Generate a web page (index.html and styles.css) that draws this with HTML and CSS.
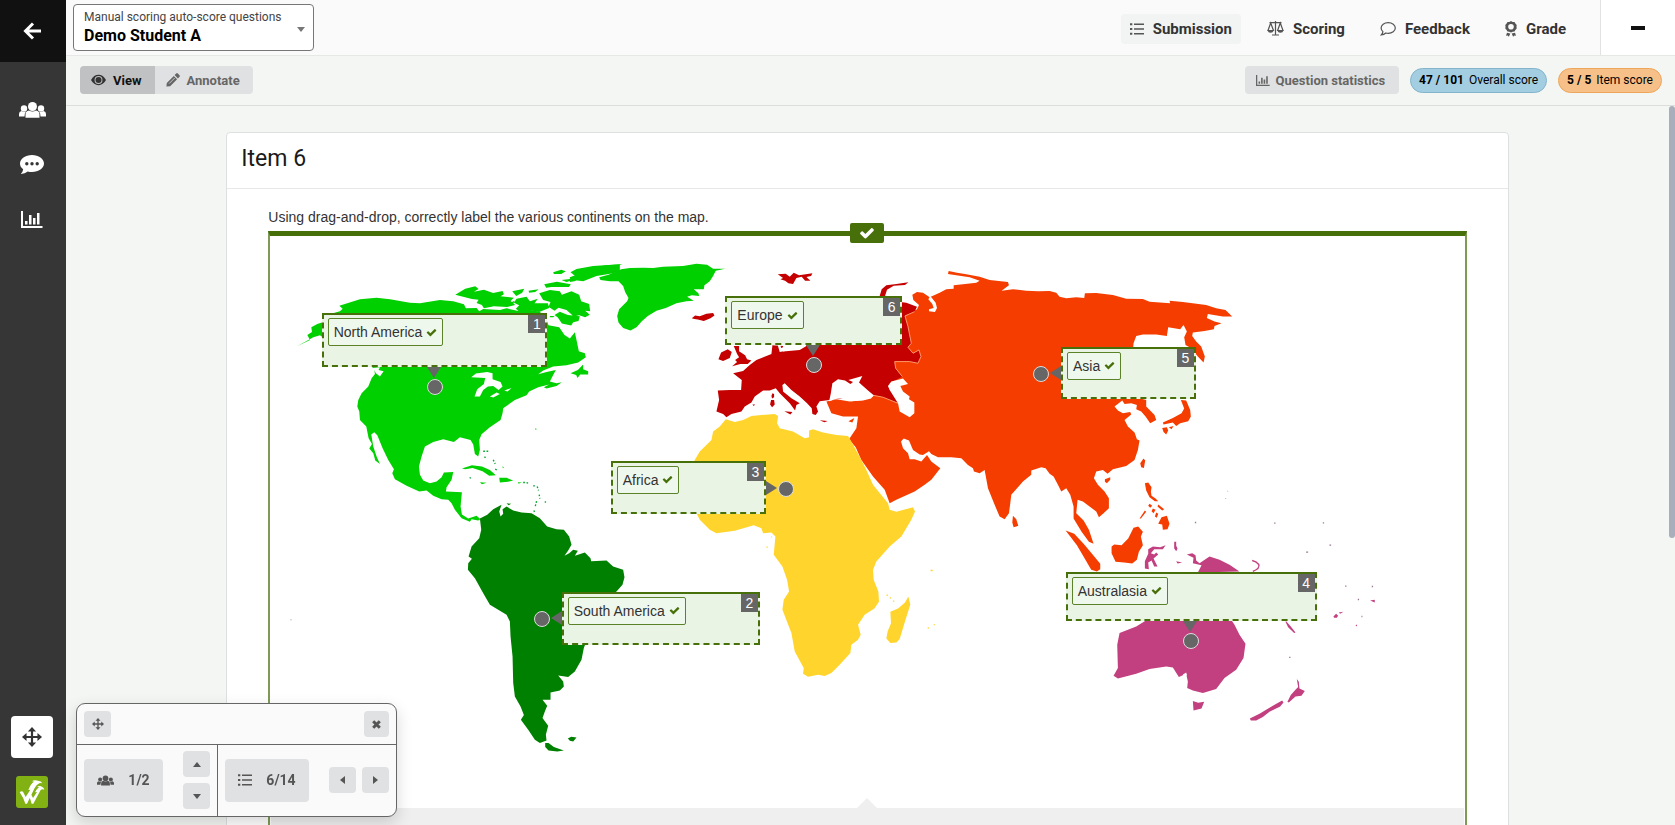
FILE: index.html
```html
<!DOCTYPE html>
<html lang="en">
<head>
<meta charset="utf-8">
<title>Item 6 – Demo Student A</title>
<link rel="stylesheet" href="styles.css">
</head>
<body>
<svg class="defs" aria-hidden="true">
  <symbol id="i-check" viewBox="0 0 1792 1792"><path d="M1671 566q0 40-28 68l-724 724-136 136q-28 28-68 28t-68-28l-136-136-362-362q-28-28-28-68t28-68l136-136q28-28 68-28t68 28l294 295 656-657q28-28 68-28t68 28l136 136q28 28 28 68z"/></symbol>
  <symbol id="i-users" viewBox="0 0 27 16"><circle cx="13.500" cy="4.500" r="4.500"/><circle cx="5" cy="6.500" r="3.200"/><circle cx="22" cy="6.500" r="3.200"/><path d="M6.500 15.800v-3q0-4 3.500-4.300 3.500 2 7 0 3.500.3 3.500 4.300v3zM0 14.600v-2.500Q0 9.500 2.500 9q2.500 1.600 4.500.6-1.500 1.400-1.500 5zM27 14.600v-2.500q0-2.600-2.500-3.100-2.500 1.600-4.500.6 1.500 1.400 1.500 5z"/></symbol>
  <symbol id="i-chart" viewBox="0 0 22 17"><path d="M0 0h2v15h19.500v2H0zM4 10h2.500v3.500H4zM8 4h2.500v9.500H8zM12 7h2.500v6.500H12zM16 2h2.500v11.500H16z"/></symbol>
  <symbol id="i-move" viewBox="0 0 22 22"><path d="M11 0l4.500 5H12.200v4.800H17V6.500l5 4.500-5 4.500v-3.300h-4.800V17h3.300L11 22l-4.500-5h3.300v-4.800H5v3.300L0 11l5-4.500v3.300h4.800V5H6.500z"/></symbol>
  <symbol id="i-list" viewBox="0 0 14 12"><path d="M0 .3h2.300v2H0zM0 5h2.300v2H0zM0 9.700h2.300v2H0zM4 .5h10v1.600H4zM4 5.200h10v1.600H4zM4 9.900h10v1.600H4z"/></symbol>
  <symbol id="i-up" viewBox="0 0 8 5"><path d="M0 5L4 0l4 5z"/></symbol>
  <symbol id="i-down" viewBox="0 0 8 5"><path d="M0 0h8L4 5z"/></symbol>
  <symbol id="i-left" viewBox="0 0 5 8"><path d="M5 0v8L0 4z"/></symbol>
  <symbol id="i-right" viewBox="0 0 5 8"><path d="M0 0v8l5-4z"/></symbol>
</svg>

<div class="app">
  <nav class="rail" aria-label="Main">
    <a class="rail-back" href="#" aria-label="Back"><svg width="19" height="18" viewBox="0 0 19 18"><path d="M10 1.500L2.500 9l7.500 7.500M3 9h15" fill="none" stroke="currentColor" stroke-width="3"/></svg></a>
    <div class="rail-links">
      <a href="#" aria-label="Students"><svg width="27" height="16"><use href="#i-users"/></svg></a>
      <a href="#" aria-label="Comments"><svg width="24" height="19" viewBox="0 0 24 19"><path fill-rule="evenodd" d="M12 0c6.600 0 12 3.800 12 8.500S18.600 17 12 17q-2.200 0-4.200-.5Q5 18.700.7 18.900 2.900 17 3.200 14.300 0 12 0 8.500C0 3.800 5.400 0 12 0zM6.800 7a1.700 1.700 0 100 3.400A1.700 1.700 0 006.800 7zM12 7a1.700 1.700 0 100 3.400A1.700 1.700 0 0012 7zm5.200 0a1.700 1.700 0 100 3.400 1.700 1.700 0 000-3.400z"/></svg></a>
      <a href="#" aria-label="Statistics"><svg width="22" height="17"><use href="#i-chart"/></svg></a>
    </div>
    <div class="rail-foot">
      <button class="rail-move" aria-label="Toggle navigation panel"><svg width="20" height="20"><use href="#i-move"/></svg></button>
      <a class="rail-logo" href="#" aria-label="Home"><svg width="32" height="32" viewBox="0 0 96 96"><path d="M11 49Q17 44 21 47L29 63 43 41 37 42Q44 23 54 17 50 15 46 17 54 10 66 14 76 15 79 22 74 20 70 22 62 26 56 36L33 83H28Q22 64 11 49zM36 54Q40 50 44 52L51 66 63 48 57 49Q62 38 69 34 66 32 62 34 70 27 78 32 84 35 85 41 78 38 74 42L52 83H47Q43 66 36 54z"/></svg></a>
    </div>
  </nav>

  <div class="main">
    <header class="topbar">
      <div class="student">
        <label for="student">Manual scoring auto-score questions</label>
        <select id="student"><option>Demo Student A</option></select>
        <svg class="student-caret" width="8" height="5"><use href="#i-down"/></svg>
      </div>
      <nav class="tabs" aria-label="Sections">
        <a class="tab tab-on" href="#"><svg width="14" height="12"><use href="#i-list"/></svg>Submission</a>
        <a class="tab" href="#"><svg width="17" height="15" viewBox="0 0 17 15"><path d="M2.500 1.700h12M8.500 0v14M5 14h7M3.700 2L1 9.500h5.500zM13.300 2l-2.700 7.500H16z" fill="none" stroke="currentColor" stroke-width="1.200"/><path d="M.5 9.200h6.200q-.5 2.600-3.100 2.600T.5 9.200zM10.300 9.200h6.200q-.5 2.600-3.100 2.600t-3.100-2.600z"/></svg>Scoring</a>
        <a class="tab" href="#"><svg width="16" height="14" viewBox="0 0 16 14"><path d="M8.200.7c4 0 7.100 2.300 7.100 5.300s-3.100 5.300-7.100 5.300q-1.300 0-2.400-.3-1.800 1.700-4.500 1.900Q2.700 11.500 2.900 9.600 1.100 8.100 1.100 6C1.100 3 4.200.7 8.200.7z" fill="none" stroke="currentColor" stroke-width="1.200"/></svg>Feedback</a>
        <a class="tab" href="#"><svg width="12" height="16" viewBox="0 0 12 16"><path fill-rule="evenodd" d="M6 0l1.600.9 1.900.1.900 1.600L11.700 4l-.2 1.800.2 1.800-1.300 1.400-.9 1.600-1.900.1L6 11.500l-1.600-.8-1.900-.1L1.600 9 .3 7.600l.2-1.800L.3 4l1.300-1.400.9-1.600L4.400.9zM6 3a2.800 2.800 0 100 5.600A2.800 2.800 0 006 3zM2 11.700l3.300.9-1.400 3.200-1.200-1.300-1.700.3zM10 11.700l-3.300.9 1.400 3.200 1.200-1.300 1.700.3z"/></svg>Grade</a>
      </nav>
      <button class="collapse" aria-label="Collapse"><span></span></button>
    </header>

    <div class="toolbar">
      <div class="modes">
        <button class="mode mode-on" aria-pressed="true"><svg width="15" height="12" viewBox="0 0 16 12"><path fill-rule="evenodd" d="M8 .5q5 0 8 5.500-3 5.500-8 5.500T0 6Q3 .5 8 .5zm0 1.300A4.200 4.200 0 008 10.200 4.200 4.200 0 008 1.800z"/><circle cx="8" cy="6" r="3.200"/></svg>View</button>
        <button class="mode" aria-pressed="false"><svg width="14" height="14" viewBox="0 0 14 14"><path d="M10.200.5q.8-.8 1.600 0l1.700 1.700q.8.800 0 1.600l-1.600 1.600-3.300-3.300zM7.800 2.900l3.300 3.300-7 7L.4 13.600.8 9.900z"/><path d="M3.200 10.500l5.500-5.500" stroke="#e0e1e2" stroke-width=".8"/></svg>Annotate</button>
      </div>
      <div class="scores">
        <button class="stats"><svg width="14" height="11"><use href="#i-chart"/></svg>Question statistics</button>
        <span class="pill pill-blue"><b>47 / 101</b>Overall score</span>
        <span class="pill pill-orange"><b>5 / 5</b>Item score</span>
      </div>
    </div>

    <div class="scroller">
      <div class="scroll-area">
      <main class="card">
        <h1>Item 6</h1>
        <div class="card-body">
          <p class="prompt">Using drag-and-drop, correctly label the various continents on the map.</p>
          <section class="question">
            <span class="result"><svg width="16" height="16"><use href="#i-check"/></svg></span>
            <div class="map">
              <svg class="world" viewBox="270 236 1195 572" role="img" aria-label="World map">
                <g transform="translate(260 240) scale(.33333)" fill="#00cf00">
                  <path d="M110 320L150 300 142 285 156 276 154 262 172 252 190 246 200 225 240 214 248 206 238 197 262 190 300 178 350 173 390 178 450 188 480 190 540 180 580 184 612 193 618 205 650 204 658 214 670 207 720 210 740 205 775 213 790 196 800 208 840 215 860 240 866 256 898 262 914 285 930 296 945 277 952 310 957 334 975 340 978 352 955 368 920 376 880 380 850 392 835 403 860 396 888 390 880 405 870 425 890 430 906 427 890 438 860 446 852 442 868 434 835 442 808 455 800 466 765 480 730 505 728 520 722 540 690 562 665 583 658 600 660 630 655 650 645 642 640 614 632 600 600 592 582 606 550 598 520 606 495 620 485 650 477 680 480 705 490 722 510 730 530 725 545 712 552 698 580 696 575 720 560 742 558 755 606 757 602 800 606 824 625 836 650 828 662 838 655 842 635 838 630 846 605 835 585 810 575 790 565 780 545 778 520 768 500 752 478 755 440 738 405 718 397 700 402 688 385 660 368 625 352 586 343 577 334 584 340 620 350 650 360 672 346 662 340 640 328 626 336 612 326 595 319 560 300 540 298 515 292 500 295 480 305 460 325 440 335 415 345 402 342 385 240 330 180 286 160 292z"/>
                  <path d="M586 164l30-18 30-7 10 8-14 8 30-6 28 10 28-6 4 10-10 6 40 4-10 10 14 12-24 6-40-2-30 6-6-10-16-6 6-10-20-2zM757 154l36-8-6 12-18 10zM806 152l30-4-10 8-18 2zM748 190l16-8-4 10-14 6zM770 176l30-6 10 14 24-8-10 14 40 0 4 14-30 12-30-6-24 10-16-14 10-10-16-8zM838 160L870 150 900 154 906 164 935 154 958 164 964 184 988 192 991 214 976 212 990 224 976 232 958 226 942 230 920 210 896 203 884 212 866 200 872 186 850 180zM853 133l38-8 42 8-6 8-52 0-16 2zM880 97l24-8 14 5-14 8-22 0zM932 97L950 87 1000 78 1080 73V92L1060 100 1010 108 970 124 940 120 920 126 905 120 938 116 946 108zM900 215l24 10 36 4-4 14-16 4-6 10-28-6-12-18-10-8zM870 228l14 0-4 4-10 0zM932 400l22-10 16-16 0 14 15 6 0 10-24 0-8 10-4-9z"/>
                  <path d="M606 686l30-10 30 4 24 10 18 16-20 2-20-14-30-10-22 4zM718 714l22 0 20 8-16 4-24 2zM660 727l20 2-14 4zM774 727l12 1-10 4zM727 680l6 2-4 2zM826 565l5 2-4 3z"/>
                  <path d="M670 634h20M674 650l5 8M700 660l6 12M706 688l6 3M790 728h6M800 728l6 2M820 738h8M832 740l4 12M838 764l2 12M830 784l-4 16M855 785l3 3M822 812l3 8M630 712l2 4" fill="none" stroke="#00a830" stroke-width="4" stroke-dasharray="5 5"/>
                  <path d="M634 412L648 401 682 396 698 400 698 418 722 426 728 440 716 450 700 438 684 440 670 450 660 470 644 470 652 448 672 432 676 414zM690 470l20-12 10 4-20 11zM733 452l22-8-12 11zM338 384L360 382 356 390 371 394 360 410 348 400z" fill="#fff"/>
                </g>
                <g transform="translate(570 240) scale(.33333)" fill="#00cf00">
                  <path d="M88 112L116 104 154 88 180 84 220 83 250 84 280 80 340 78 380 71 412 74 430 86 466 86 438 92 430 108 420 124 404 136 402 148 372 148 386 160 388 168 366 166 352 170 372 182 350 184 320 190 288 204 260 212 234 228 216 244 200 262 182 272 160 264 146 248 142 228 148 208 172 184 176 174 166 156 160 138 146 124 120 124 92 120zM0 112L20 104 16 94 60 84 110 76 158 73 120 86 60 100 14 124 0 126z"/>
                </g>
                <g transform="translate(880 250) scale(.33333)" fill="#f53d00">
                  <path d="M78 198L112 178 118 165 101 150 98 134 112 126 130 128 150 142 180 128 200 118 222 116 222 106 250 103 290 98 300 92 270 82 205 72 207 63 232 68 256 72 300 80 330 90 385 96 388 106 366 122 400 118 440 122 476 124 510 123 530 128 540 140 560 145 590 142 614 144 616 130 650 129 700 135 740 146 790 147 810 155 872 160 870 152 910 156 980 165 1010 175 1038 180 1058 200 1030 200 985 192 982 204 1005 215 1026 220 1005 228 1003 238 975 243 940 248 938 258 950 275 965 290 976 320 972 338 955 320 935 295 918 285 914 262 922 245 912 225 902 238 866 232 862 258 830 254 790 254 770 258 762 280 760 300 760 440 800 450 800 470 825 495 830 510 812 520 798 500 785 485 770 478 772 465 755 460 735 462 728 452 705 470 715 482 730 490 752 486 755 494 735 510 745 530 765 548 772 568 780 572 775 600 765 630 740 648 700 658 684 672 670 660 650 665 643 685 655 705 675 725 688 745 688 775 672 790 658 802 650 785 630 770 610 755 594 750 590 790 612 812 628 840 642 882 628 876 606 846 582 806 582 770 572 735 560 715 545 725 535 705 522 680 510 672 498 655 485 652 455 662 455 675 430 695 415 712 395 735 392 760 388 790 375 808 360 800 345 765 325 715 315 660 300 670 283 665 280 655 265 645 245 625 215 622 175 622 155 612 148 604 130 615 120 614 100 600 88 572 72 566 64 575 70 595 85 610 90 628 105 628 125 635 142 615 155 635 182 655 155 690 135 705 105 725 50 750 30 760 15 720 -20 680 -55 630 -72 592 -92 568 -70 535 -65 500 -110 500 -145 490 -160 455 -130 448 -90 455 -50 450 -20 440 0 350 0 260z"/>
                  <path d="M152 138l16 20 4 16-6 12-18-2 0-6 14-4-4-12-12-14z" fill="#fff"/>
                  <path d="M904 450L920 452 932 480 934 500 926 514 902 520 890 528 880 518 852 524 850 518 880 504 906 490 914 476zM848 534l14-2 4 10-6 12-8-8zM868 532l14-4-6 10zM782 640l10-14 5 6-4 22-8-2zM676 688l16-6 0 8-10 10-6-4zM796 700l10-2 10 14-2 14 2 12 12 8 8 8-10 0-16-12-10-20zM796 782l-16 24 4 0 16-20zM400 798l10 10 6 20-14 4-4-14zM830 744l10 6M810 762l8 6-6 6-6-6zM820 776l8 4-6 10-6-6zM836 764l18 14-6 4-14-12zM830 788l6 4-4 12-6-4zM846 802l16-4 8 24-6 16-14 2-2-16-12-2zM-94 514L-76 504-82 518z"/>
                </g>
                <g transform="translate(570 240) scale(.33333)" fill="#c40000">
                  <path d="M624 103l24-2 12 9 12-12 16 8 40-6-4 8-14 3 12 11-16 0-10-12-16 4-10 18-14-2-10-8-14-4 8-4zM366 235l10-8 14 2 20-8 20-2 4 8-12 8-20 8-18-4-10-2zM930 168l6-20 14-12 30-4 36-5-10 8-34 2-20 12-6 19z"/>
                  <path d="M446 358L454 338 474 328 486 336 480 354 460 363zM492 318L508 318 508 334 526 346 532 358 545 362 534 372 512 372 487 379 502 366 496 360 508 352 502 342z"/>
                  <path d="M440 515L448 480 444 452 480 450 514 450 516 420 490 400 520 393 540 375 560 360 605 342 608 316 640 318 640 335 690 330 710 318 720 250 985 250 985 185 1010 188 1042 200 1035 215 1006 228 1015 260 1025 310 1015 322 1030 340 1048 330 1054 350 1045 370 1020 365 975 365 978 385 998 410 960 430 955 440 985 490 940 472 910 466 850 470 780 480 750 484 740 500 745 515 738 525 728 522 726 505 712 490 690 470 665 450 645 430 638 435 640 455 665 475 690 490 680 495 676 512 660 490 630 460 618 445 600 452 580 452 555 470 545 488 525 500 515 515 485 522 470 532 460 522z"/>
                  <path d="M608 460l5 2 0 10-6 4-2-8zM604 480l9 0 2 14-8 8-6-8zM644 514l24 2-6 8zM750 541l24 2-10 4zM548 494l8 0-4 4z"/>
                  <path d="M1035 215L1006 228 1015 260 1025 310 1015 322 1030 340 1048 330 1054 350 1045 370 1020 365 975 365 978 385 998 410M985 490L940 472 910 466" fill="none" stroke="#ff9a68" stroke-width="3"/>
                  <path d="M778 484L783 462 788 430 805 418 826 422 842 432 850 426 836 420 878 408 868 428 895 452 912 466 904 476 880 482 845 484 815 474 795 478zM965 425L1000 416 1015 432 992 438 1000 455 1020 470 1018 478 1034 488 1034 520 1020 532 990 515 985 490 960 450 955 438zM624 316l8-2 2 10 16-6 12 2-8 12-24 4z" fill="#fff"/>
                </g>
                <g transform="translate(680 400) scale(.33333)" fill="#ffd52d">
                  <path d="M44 182L60 155 95 120 100 95 120 80 138 58 165 66 190 60 215 48 285 42 295 48 292 70 300 85 340 95 375 115 388 112 388 92 400 88 430 98 470 105 505 108 515 125 545 180 560 210 580 255 625 310 630 330 650 336 700 322 706 335 695 360 665 410 630 440 590 485 580 510 582 540 596 575 598 605 585 625 555 645 535 675 543 705 535 720 515 735 512 760 480 795 455 820 435 829 415 825 385 831 370 822 372 805 345 755 335 700 308 630 312 600 328 575 322 540 308 500 282 465 287 410 275 398 250 400 245 385 222 376 165 393 110 400 90 390 60 360 50 340z"/>
                  <path d="M686 590L692 614 678 658 660 718 650 728 632 730 620 716 624 694 634 670 632 636 655 626 676 608zM274 410h3v3h-3zM260 440h4v4h-4zM753 510h6v4h-6zM620 584h5v4h-5zM630 592h4v4h-4zM640 602h4v4h-4zM744 682h4v4h-4zM762 673h4v3h-4z"/>
                </g>
                <g transform="translate(1040 400) scale(.33333)" fill="#f53d00">
                  <path d="M78 392L104 402 132 432 156 460 182 492 182 508 172 515 155 510 134 474 112 436 92 410zM216 440L224 434 246 436 266 416 282 384 296 380 310 396 304 410 310 436 298 456 292 480 278 491 254 488 228 486 216 460z"/>
                  <g fill="#c23f80">
                    <path d="M316 506L316 484 326 462 326 448 340 440 362 442 378 436 370 448 344 448 334 460 344 464 350 458 356 464 342 476 354 500 344 500 336 482 326 488 328 508zM404 426l6 0 0 12 4 8-4 8-6-8zM410 484l18 4-14 3zM442 464L458 460 468 466 470 482 480 490 510 470 540 480 570 495 600 515 475 518 486 496 460 490 462 474z"/>
                    <path d="M640 515Q662 506 658 494 650 484 638 482" fill="none" stroke="#c23f80" stroke-width="4"/>
                    <path d="M330 655H572L585 675 600 705 618 732 612 775 590 810 555 835 530 868 490 880 460 872 443 865 445 845 440 822 418 832 400 803 380 800 330 808 290 822 235 836 222 828 235 805 233 735 240 700 290 680zM460 904l16 5 18-3-8 20-24 6zM740 664l14 16 14 18-4 2-18-18-8-16zM772 838L778 846 780 866 796 874 786 888 768 890 748 908 744 906 754 886 768 870 776 862zM728 902L732 908 722 920 690 936 670 952 650 962 634 962 631 956 660 942 700 918z"/>
                    <path d="M882 650l8-8 6 6-4 6-8 0zM898 638l14-2-10 6zM992 602l14-2 0 8zM948 676l5-2-1 6z"/>
                    <path d="M466 368h4M704 370h4M850 369h4M870 436h5M800 457h6M917 559h4M955 599h4M966 650h3M749 773h4M997 560h4" stroke="#9b7a91" stroke-width="4"/>
                    <path d="M563 274h3M557 296h3" stroke="#bbb" stroke-width="3"/>
                  </g>
                  <path d="M430 824l10-6 2 8-10 12-6 0 6-10z" fill="#fff"/>
                </g>
                <g transform="translate(460 490) scale(.33333)" fill="#008000">
                  <path d="M60 86L82 75 100 58 125 45 118 65 122 80 130 72 128 58 140 50 160 62 185 68 215 70 240 85 262 110 290 118 312 120 328 140 335 165 325 182 314 198 328 190 340 180 354 183 345 198 375 188 392 205 394 214 440 212 460 230 490 240 494 262 488 285 470 305 400 360 385 440 372 475 365 510 345 545 325 562 295 557 310 575 312 590 300 602 272 608 272 630 255 630 248 630 262 648 255 665 248 685 265 708 258 735 260 752 240 760 225 750 205 720 183 690 192 676 182 650 165 620 160 580 158 500 152 440 150 395 140 375 90 345 70 310 45 265 24 240 25 220 36 207 26 200 35 170 58 145 64 120z"/>
                  <path d="M256 760l10 0 16 12 30 10-20 3-26-3-10-10zM324 746l10-5 16 2-10 12-10-2zM140 40l14 2-8 4z"/>
                </g>
                <circle cx="291" cy="620" r=".6" fill="#999"/>
              </svg>

              <div class="drop north-america point-down"><span class="answer">North America<svg width="11" height="11"><use href="#i-check"/></svg></span><b>1</b></div>
              <div class="drop south-america point-left"><span class="answer">South America<svg width="11" height="11"><use href="#i-check"/></svg></span><b>2</b></div>
              <div class="drop africa point-right"><span class="answer">Africa<svg width="11" height="11"><use href="#i-check"/></svg></span><b>3</b></div>
              <div class="drop australasia point-down"><span class="answer">Australasia<svg width="11" height="11"><use href="#i-check"/></svg></span><b>4</b></div>
              <div class="drop asia point-left"><span class="answer">Asia<svg width="11" height="11"><use href="#i-check"/></svg></span><b>5</b></div>
              <div class="drop europe point-down"><span class="answer">Europe<svg width="11" height="11"><use href="#i-check"/></svg></span><b>6</b></div>
            </div>
            <div class="answers"></div>
          </section>
        </div>
      </main>
      </div>
      <div class="scrollbar"></div>
    </div>
  </div>
</div>

<aside class="panel" aria-label="Navigation">
  <div class="panel-head">
    <button class="key" aria-label="Move panel"><svg width="12" height="12"><use href="#i-move"/></svg></button>
    <button class="key" aria-label="Close panel"><svg width="9" height="9" viewBox="0 0 9 9"><path d="M1.200 1.200l6.600 6.600M7.800 1.200L1.200 7.800" stroke="currentColor" stroke-width="3"/></svg></button>
  </div>
  <div class="panel-body">
    <div class="panel-part">
      <button class="count count-student"><svg width="17" height="11"><use href="#i-users"/></svg>1/2</button>
      <div class="steps steps-col">
        <button class="key" aria-label="Previous student"><svg width="8" height="5"><use href="#i-up"/></svg></button>
        <button class="key" aria-label="Next student"><svg width="8" height="5"><use href="#i-down"/></svg></button>
      </div>
    </div>
    <div class="panel-part">
      <button class="count count-item"><svg width="14" height="12"><use href="#i-list"/></svg>6/14</button>
      <div class="steps">
        <button class="key" aria-label="Previous item"><svg width="5" height="8"><use href="#i-left"/></svg></button>
        <button class="key" aria-label="Next item"><svg width="5" height="8"><use href="#i-right"/></svg></button>
      </div>
    </div>
  </div>
</aside>
</body>
</html>
```
FILE: styles.css
```css
* { box-sizing: border-box; }
body { margin: 0; font-family: Roboto, "Open Sans", sans-serif; color: #222; overflow: hidden; }
a { color: inherit; text-decoration: none; }
button { font: inherit; color: inherit; border: 0; padding: 0; margin: 0; cursor: pointer; }
svg { display: block; fill: currentColor; flex: none; }
.defs { position: absolute; width: 0; height: 0; }

.app { display: flex; height: 100vh; }

/* Left rail */
.rail { display: flex; flex-direction: column; flex: none; width: 66px; background: #363636; color: #fff; }
.rail-back { display: flex; align-items: center; justify-content: center; height: 62px; padding-right: 2px; background: #111; }
.rail-links { display: flex; flex-direction: column; gap: 37px; align-items: center; padding: 40px 2px 0 0; }
.rail-foot { display: flex; flex-direction: column; align-items: center; gap: 18px; margin-top: auto; padding: 0 2px 17px 0; }
.rail-move { display: flex; align-items: center; justify-content: center; width: 42px; height: 42px; border-radius: 4px; background: #fff; color: #333; }
.rail-logo { border-radius: 3px; background: #82b114; }

.main { display: flex; flex-direction: column; flex: 1; min-width: 0; background: #f4f6f4; }

/* Top bar */
.topbar { display: flex; align-items: center; flex: none; height: 56px; padding-left: 7px; background: #fafafa; border-bottom: 1px solid #e6e8e6; }
.student { display: grid; position: relative; width: 241px; height: 47px; padding: 4px 11px 4px 10px; border: 1px solid #777; border-radius: 4px; background: #fff; }
.student label { font-size: 12px; line-height: 16px; color: #444; white-space: nowrap; }
.student select { appearance: none; border: 0; padding: 0; background: none; font: bold 16px/20px Roboto, "Open Sans", sans-serif; color: #000; }
.student-caret { position: absolute; right: 8px; top: 22px; color: #777; }
.tabs { display: flex; gap: 17px; margin-left: auto; margin-right: 25px; padding-top: 2px; }
.tab { display: flex; align-items: center; gap: 9px; height: 30px; padding: 0 9px; border-radius: 4px; font-size: 15px; font-weight: 700; color: #333; }
.tab svg { color: #555; }
.tab-on { background: #f2f3f3; }
.collapse { display: flex; align-items: center; justify-content: center; align-self: stretch; width: 75px; background: #fff; border-left: 1px solid #e2e2e2; }
.collapse span { width: 14px; height: 4px; background: #111; }

/* Toolbar */
.toolbar { display: flex; align-items: center; justify-content: space-between; flex: none; height: 50px; padding: 0 13px 1px 14px; border-bottom: 1px solid #dcdedc; }
.modes { display: flex; border-radius: 4px; overflow: hidden; }
.mode, .stats { display: flex; align-items: center; height: 28px; font-size: 13px; font-weight: 700; background: #e0e1e2; color: #666; }
.mode { gap: 7px; padding: 0 13px 0 11px; }
.mode-on { background: #c0c1c2; color: #111; }
.mode-on svg { color: #333; }
.scores { display: flex; align-items: center; gap: 11px; }
.stats { gap: 6px; padding: 0 14px 0 11px; border-radius: 4px; }
.pill { display: flex; align-items: center; gap: 5px; height: 25px; padding: 0 8px; border: 1px solid; border-radius: 13px; font-size: 12px; color: #000; white-space: nowrap; }
.pill-blue { background: #a3cee1; border-color: #83b4cb; }
.pill-orange { background: #f6c088; border-color: #eda65a; }

/* Item */
.scroller { display: flex; flex: 1; min-height: 0; overflow: hidden; }
.scroll-area { flex: 1; min-width: 0; }
.scrollbar { flex: none; width: 6px; height: 432px; border-radius: 4px; background: #a9aebb; }
.card { width: 80%; margin: 26px auto 0; border: 1px solid #dedfe0; border-radius: 4px; background: #fff; }
.card h1 { margin: 0; padding: 12px 14px 15px; font-size: 23px; line-height: 28px; font-weight: 400; color: #1a1a1a; border-bottom: 1px solid #e8e8e8; }
.card-body { padding: 18px 41px 40px; font-family: "Liberation Sans", Arial, sans-serif; font-size: 14px; color: #333; }
.prompt { margin: 0; padding-bottom: 4px; line-height: 20px; }
.question { position: relative; border: 2px solid #7f9a55; border-top: 5px solid #47700b; }
.result { position: absolute; z-index: 1; top: -13px; left: 50%; transform: translateX(-50%); display: flex; justify-content: center; align-items: center; width: 34px; height: 20px; border-radius: 2px; background: #47700b; color: #fff; }
.map { position: relative; }
.world { width: 100%; height: auto; }
.map::after { content: ""; position: absolute; left: 50%; bottom: 0; margin-left: -10px; border: 10px solid transparent; border-top: 0; border-bottom-color: #efefef; }
.answers { height: 90px; margin: 0 1px; background: #efefef; }

/* Drop zones on the map */
.drop { position: absolute; border: 2px dashed #47700b; border-top-style: solid; background: #eaf4e5; padding: 3px 4px; }
.answer { display: inline-flex; align-items: center; gap: 4px; height: 28px; padding: 0 5px; border: 1px solid #5b8228; border-radius: 2px; background: #eff8ec; }
.answer svg { color: #47700b; }
.drop b { position: absolute; top: 0; right: 0; width: 17px; height: 18px; background: #666; color: #fff; font-weight: 400; line-height: 18px; text-align: center; }
.drop::before, .drop::after { content: ""; position: absolute; }
.drop::before { width: 14px; height: 14px; border-radius: 50%; border: 1px solid #ddd; background: #666; }
.drop::after { border: 7px solid transparent; }
.point-down::before { left: 50%; top: calc(100% + 14px); margin-left: -8px; }
.point-down::after { left: 50%; top: calc(100% + 2px); margin-left: -8px; border-top: 11px solid #666; border-bottom: 0; }
.point-left::before { right: calc(100% + 14px); top: 50%; margin-top: -7px; }
.point-left::after { right: calc(100% + 2px); top: 50%; margin-top: -7px; border-right: 11px solid #666; border-left: 0; }
.point-right::before { left: calc(100% + 14px); top: 50%; margin-top: -7px; }
.point-right::after { left: calc(100% + 2px); top: 50%; margin-top: -7px; border-left: 11px solid #666; border-right: 0; }
.north-america { left: 4.3%; top: 13.5%; width: 18.9%; height: 9.5%; }
.south-america { left: 24.4%; top: 62.2%; width: 16.6%; height: 9.4%; }
.africa { left: 28.5%; top: 39.3%; width: 13%; height: 9.4%; }
.australasia { left: 66.6%; top: 58.7%; width: 21%; height: 8.6%; }
.asia { left: 66.2%; top: 19.4%; width: 11.3%; height: 9.1%; }
.europe { left: 38.1%; top: 10.5%; width: 14.8%; height: 8.5%; }

/* Floating navigation panel */
.panel { position: fixed; left: 76px; bottom: 8px; width: 321px; border: 1px solid #666; border-radius: 9px; background: #fafafa; box-shadow: 0 6px 16px rgba(0, 0, 0, .16); color: #555; }
.panel-head { display: flex; justify-content: space-between; padding: 7px; border-bottom: 1px solid #666; }
.key { display: flex; align-items: center; justify-content: center; width: 27px; height: 26px; border-radius: 4px; background: #e0e1e2; }
.panel-head .key:last-child { width: 25px; }
.panel-body { display: grid; grid-template-columns: 140px 1fr; }
.panel-part { display: flex; align-items: center; justify-content: space-between; padding: 6px 7px 7px; }
.panel-part + .panel-part { border-left: 1px solid #666; }
.count { display: flex; align-items: center; justify-content: center; gap: 14px; height: 43px; border-radius: 4px; background: #e0e1e2; font-size: 14px; font-weight: 700; }
.count-student { width: 79px; }
.count-item { width: 84px; }
.steps { display: flex; gap: 6px; }
.steps-col { flex-direction: column; }
```
